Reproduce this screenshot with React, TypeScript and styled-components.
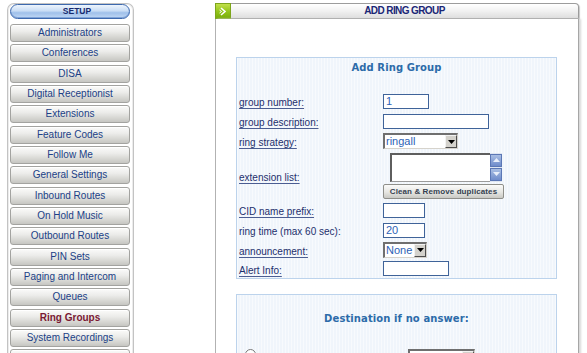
import React from "react";
import styled, { createGlobalStyle } from "styled-components";

const Global = createGlobalStyle`
  html, body { margin: 0; padding: 0; overflow: hidden; background: #ffffff; }
  body { font-family: "Liberation Sans", Arial, sans-serif; }
  * { box-sizing: border-box; }
`;

const Page = styled.div`
  display: flex;
  align-items: flex-start;
  gap: 81px;
  padding: 3px 0 0 7px;
  height: 353px;
`;

const Sidebar = styled.nav`
  width: 127px;
  height: 420px;
  border: 1px solid #c3c3c3;
  border-bottom: none;
  border-radius: 7px 7px 0 0;
  box-shadow: inset 0 0 0 1px #ececec;
  padding: 0 3px 0 2px;
  background: #fff;
`;

const SectionPill = styled.div`
  height: 15px;
  margin-bottom: 5px;
  border: 1px solid #3d69ae;
  border-radius: 8px;
  background: linear-gradient(#eef5fd 0%, #c9ddf5 45%, #9fc0ea 60%, #c1d8f4 100%);
  box-shadow: inset 0 -1px 0 #7fa3d8;
  color: #172a6e;
  font-size: 8.5px;
  font-weight: bold;
  line-height: 13px;
  text-align: center;
  padding-left: 14px;
`;

const NavButton = styled.div<{ $active?: boolean }>`
  height: 18px;
  margin-bottom: 2.33px;
  border: 1px solid #a3a3a0;
  border-radius: 3px;
  background: linear-gradient(#fbfbfa 0%, #ececea 40%, #d6d6d2 75%, #c6c6c2 100%);
  box-shadow: inset 0 1px 0 #ffffff;
  color: ${(p) => (p.$active ? "#7a1832" : "#203f86")};
  font-size: 10px;
  font-weight: ${(p) => (p.$active ? "bold" : "normal")};
  line-height: 16px;
  text-align: center;
  white-space: nowrap;
`;

const Main = styled.main`
  width: 364px;
  display: flex;
  flex-direction: column;
`;

const Header = styled.div`
  display: flex;
  height: 16px;
  border: 1px solid #9c9c9c;
  border-left: none;
  border-radius: 0 4px 0 0;
  background: linear-gradient(#ffffff 0%, #f1f1f1 50%, #dedede 100%);
  box-shadow: 1px 1px 1px #c8c8c8;
`;

const HeaderIcon = styled.div`
  width: 16px;
  height: 16px;
  margin-top: -1px;
  background: linear-gradient(#c2e04a 0%, #93c41a 55%, #7aae0c 100%);
  border: 1px solid #7da51c;
  display: flex;
  align-items: center;
  justify-content: center;
`;

const HeaderTitle = styled.div`
  flex: 1;
  text-align: center;
  color: #1a2676;
  font-size: 10px;
  font-weight: bold;
  letter-spacing: -0.6px;
  line-height: 14px;
`;

const Body = styled.div`
  height: 400px;
  border-left: 1px solid #b2b2b2;
  border-right: 1px solid #a6a6a6;
  box-shadow: 2px 0 2px #d8d8d8;
  padding: 38px 0 0 20px;
  background: #fff;
`;

const FormBox = styled.section<{ $gap?: number }>`
  width: 321px;
  margin-top: ${(p) => p.$gap ?? 0}px;
  border: 1px solid #bcd3ec;
  background-color: #f0f5fb;
  background-image: repeating-linear-gradient(90deg, rgba(255,255,255,0.5) 0 1px, transparent 1px 3px);
`;

const BoxTitle = styled.h2<{ $top?: number; $bottom?: number }>`
  margin: 0;
  padding-top: ${(p) => p.$top ?? 0}px;
  margin-bottom: ${(p) => p.$bottom ?? 0}px;
  font-family: "DejaVu Sans", Verdana, sans-serif;
  font-size: 10px;
  font-weight: bold;
  line-height: 20px;
  color: #2c6ba9;
  text-align: center;
  letter-spacing: 0.1px;
`;

const Row = styled.div<{ $h: number }>`
  display: flex;
  align-items: center;
  height: ${(p) => p.$h}px;
`;

const LabelCell = styled.div`
  width: 146px;
  padding-left: 2px;
`;

const Label = styled.span<{ $plain?: boolean }>`
  font-size: 10px;
  color: #1d2f6c;
  text-decoration: ${(p) => (p.$plain ? "none" : "underline")};
  text-decoration-color: #4b5d92;
  text-underline-offset: 2px;
`;

const TextInput = styled.input<{ $w: number }>`
  width: ${(p) => p.$w}px;
  height: 15px;
  border: 1px solid #3f6399;
  background: #fff;
  padding: 0 2px;
  font-family: "Liberation Sans", Arial, sans-serif;
  font-size: 11px;
  color: #2d62b6;
  outline: none;
`;

const SelectBox = styled.div<{ $w: number }>`
  display: flex;
  width: ${(p) => p.$w}px;
  height: 16px;
  border-top: 2px solid #6f6f6f;
  border-left: 2px solid #6f6f6f;
  border-bottom: 1px solid #d6d3cc;
  border-right: 1px solid #d6d3cc;
  background: #fff;
`;

const SelectText = styled.div`
  flex: 1;
  font-size: 11px;
  line-height: 12px;
  color: #2d62b6;
  padding-left: 1px;
`;

const SelectArrow = styled.div`
  width: 12px;
  border: 1px solid #4d4d4d;
  border-top-color: #f2f2f2;
  border-left-color: #f2f2f2;
  background: #d4d2cc;
  display: flex;
  align-items: center;
  justify-content: center;
`;

const ExtField = styled.div`
  display: flex;
  flex-direction: column;
`;

const ListArea = styled.div`
  display: flex;
  width: 112px;
  height: 29px;
  margin-left: 7px;
`;

const ListBody = styled.div`
  flex: 1;
  background: #fff;
  border-top: 2px solid #5e5e5e;
  border-left: 2px solid #5e5e5e;
  border-bottom: 1px solid #9a9a9a;
`;

const ScrollCol = styled.div`
  width: 12px;
  display: flex;
  flex-direction: column;
  justify-content: space-between;
  background: #dfe6f2;
  padding: 1px 0;
`;

const ScrollBtn = styled.div`
  height: 13px;
  background: linear-gradient(#a9bee4, #6f8ccb);
  border: 1px solid #5b77b5;
  display: flex;
  align-items: center;
  justify-content: center;
`;

const CleanButton = styled.button`
  width: 121px;
  height: 15px;
  margin-top: 2px;
  padding: 0;
  border: 1px solid #8f8f8a;
  border-radius: 2px;
  background: linear-gradient(#fbfbfa 0%, #e6e6e2 55%, #c9c9c4 100%);
  font-family: "Liberation Sans", Arial, sans-serif;
  font-size: 8px;
  font-weight: bold;
  color: #343f50;
  letter-spacing: 0.1px;
`;

const Radio = styled.span`
  display: inline-block;
  width: 11px;
  height: 11px;
  margin: 0 0 0 8px;
  border: 1px solid #7a7a7a;
  border-radius: 50%;
  background: #fff;
`;

const DestRow = styled.div`
  display: flex;
  align-items: flex-start;
  height: 34px;
  padding-top: 20px;
`;

const DestSpacer = styled.div`
  width: 152px;
`;

const Tri = ({ dir, color }: { dir: "up" | "down"; color: string }) => (
  <svg width="7" height="4" viewBox="0 0 7 4">
    {dir === "down" ? (
      <polygon points="0,0 7,0 3.5,4" fill={color} />
    ) : (
      <polygon points="0,4 7,4 3.5,0" fill={color} />
    )}
  </svg>
);

const navItems = [
  "Administrators",
  "Conferences",
  "DISA",
  "Digital Receptionist",
  "Extensions",
  "Feature Codes",
  "Follow Me",
  "General Settings",
  "Inbound Routes",
  "On Hold Music",
  "Outbound Routes",
  "PIN Sets",
  "Paging and Intercom",
  "Queues",
  "Ring Groups",
  "System Recordings",
  "",
];

export default function App() {
  return (
    <>
      <Global />
      <Page>
        <Sidebar>
          <SectionPill>SETUP</SectionPill>
          {navItems.map((n, i) => (
            <NavButton key={i} $active={n === "Ring Groups"}>
              {n}
            </NavButton>
          ))}
        </Sidebar>
        <Main>
          <Header>
            <HeaderIcon>
              <svg width="8" height="9" viewBox="0 0 8 9">
                <path d="M2 1 L6 4.5 L2 8" fill="none" stroke="#ffffff" strokeWidth="1.6" />
                <path d="M0.5 3 L2.5 4.5 L0.5 6" fill="none" stroke="#ffffff" strokeWidth="1" />
              </svg>
            </HeaderIcon>
            <HeaderTitle>ADD RING GROUP</HeaderTitle>
          </Header>
          <Body>
            <FormBox>
              <BoxTitle $bottom={13}>Add Ring Group</BoxTitle>
              <Row $h={20}>
                <LabelCell><Label>group number:</Label></LabelCell>
                <TextInput $w={46} defaultValue="1" />
              </Row>
              <Row $h={20}>
                <LabelCell><Label>group description:</Label></LabelCell>
                <TextInput $w={106} defaultValue="" />
              </Row>
              <Row $h={20}>
                <LabelCell><Label>ring strategy:</Label></LabelCell>
                <SelectBox $w={75}>
                  <SelectText>ringall</SelectText>
                  <SelectArrow><Tri dir="down" color="#000" /></SelectArrow>
                </SelectBox>
              </Row>
              <Row $h={49}>
                <LabelCell><Label>extension list:</Label></LabelCell>
                <ExtField>
                  <ListArea>
                    <ListBody />
                    <ScrollCol>
                      <ScrollBtn><Tri dir="up" color="#e8eefa" /></ScrollBtn>
                      <ScrollBtn><Tri dir="down" color="#e8eefa" /></ScrollBtn>
                    </ScrollCol>
                  </ListArea>
                  <CleanButton type="button">Clean &amp; Remove duplicates</CleanButton>
                </ExtField>
              </Row>
              <Row $h={20}>
                <LabelCell><Label>CID name prefix:</Label></LabelCell>
                <TextInput $w={42} defaultValue="" />
              </Row>
              <Row $h={20}>
                <LabelCell><Label $plain>ring time (max 60 sec):</Label></LabelCell>
                <TextInput $w={42} defaultValue="20" />
              </Row>
              <Row $h={19}>
                <LabelCell><Label>announcement:</Label></LabelCell>
                <SelectBox $w={44}>
                  <SelectText>None</SelectText>
                  <SelectArrow><Tri dir="down" color="#000" /></SelectArrow>
                </SelectBox>
              </Row>
              <Row $h={19}>
                <LabelCell><Label>Alert Info:</Label></LabelCell>
                <TextInput $w={66} defaultValue="" />
              </Row>
            </FormBox>
            <FormBox $gap={15}>
              <BoxTitle $top={14}>Destination if no answer:</BoxTitle>
              <DestRow>
                <Radio />
                <DestSpacer />
                <SelectBox $w={67}>
                  <SelectText />
                  <SelectArrow><Tri dir="down" color="#000" /></SelectArrow>
                </SelectBox>
              </DestRow>
            </FormBox>
          </Body>
        </Main>
      </Page>
    </>
  );
}
